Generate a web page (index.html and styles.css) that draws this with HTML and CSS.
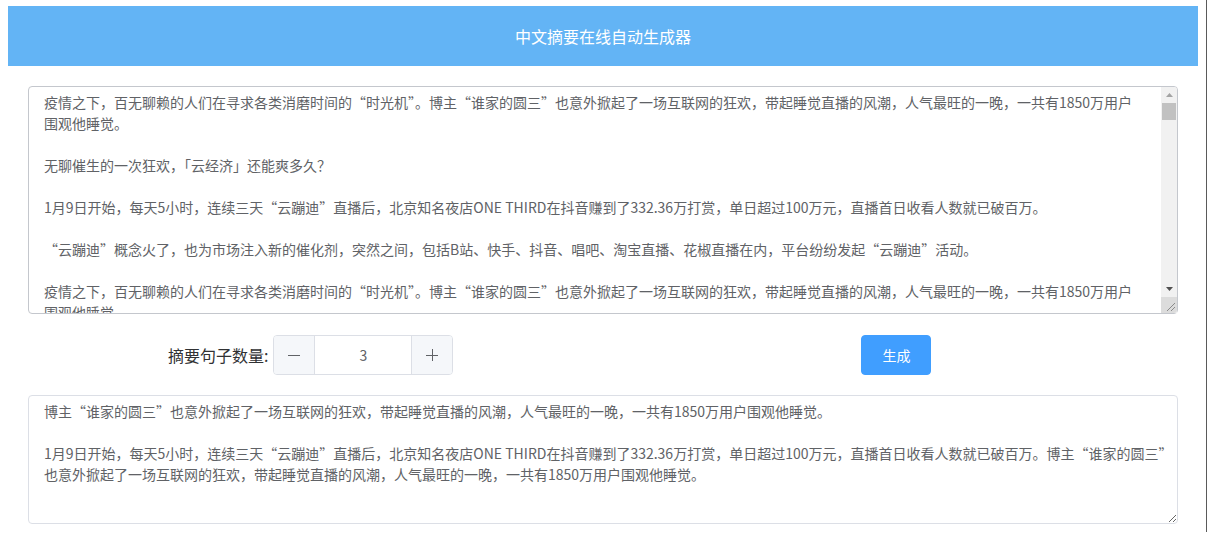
FILE: index.html
```html
<!DOCTYPE html>
<html lang="zh-CN">
<head>
  <meta charset="UTF-8">
  <title>中文摘要在线自动生成器</title>
  <link rel="stylesheet" href="styles.css">
</head>
<body>

  <div class="header">中文摘要在线自动生成器</div>

  <div class="main">
    <div class="source-wrap">
      <textarea id="source" class="box source" rows="10">疫情之下，百无聊赖的人们在寻求各类消磨时间的“时光机”。博主“谁家的圆三”也意外掀起了一场互联网的狂欢，带起睡觉直播的风潮，人气最旺的一晚，一共有1850万用户围观他睡觉。

无聊催生的一次狂欢，「云经济」还能爽多久？

1月9日开始，每天5小时，连续三天“云蹦迪”直播后，北京知名夜店ONE THIRD在抖音赚到了332.36万打赏，单日超过100万元，直播首日收看人数就已破百万。

“云蹦迪”概念火了，也为市场注入新的催化剂，突然之间，包括B站、快手、抖音、唱吧、淘宝直播、花椒直播在内，平台纷纷发起“云蹦迪”活动。

疫情之下，百无聊赖的人们在寻求各类消磨时间的“时光机”。博主“谁家的圆三”也意外掀起了一场互联网的狂欢，带起睡觉直播的风潮，人气最旺的一晚，一共有1850万用户围观他睡觉。

无聊催生的一次狂欢，「云经济」还能爽多久？

1月9日开始，每天5小时，连续三天“云蹦迪”直播后，北京知名夜店ONE THIRD在抖音赚到了332.36万打赏，单日超过100万元，直播首日收看人数就已破百万。

“云蹦迪”概念火了，也为市场注入新的催化剂，突然之间，包括B站、快手、抖音、唱吧、淘宝直播、花椒直播在内，平台纷纷发起“云蹦迪”活动。

疫情之下，百无聊赖的人们在寻求各类消磨时间的“时光机”。博主“谁家的圆三”也意外掀起了一场互联网的狂欢，带起睡觉直播的风潮，人气最旺的一晚，一共有1850万用户围观他睡觉。

无聊催生的一次狂欢，「云经济」还能爽多久？

1月9日开始，每天5小时，连续三天“云蹦迪”直播后，北京知名夜店ONE THIRD在抖音赚到了332.36万打赏，单日超过100万元，直播首日收看人数就已破百万。

“云蹦迪”概念火了，也为市场注入新的催化剂，突然之间，包括B站、快手、抖音、唱吧、淘宝直播、花椒直播在内，平台纷纷发起“云蹦迪”活动。</textarea>
      <!-- classic scrollbar (headless hides the real one) -->
      <div class="fake-bar">
        <span class="arrow">
          <svg width="7" height="4" viewBox="0 0 7 4"><polygon points="0,4 3.5,0 7,4" fill="#a3a3a3"/></svg>
        </span>
        <span class="track"><span class="thumb"></span></span>
        <span class="arrow">
          <svg width="7" height="4" viewBox="0 0 7 4"><polygon points="0,0 3.5,4 7,0" fill="#505050"/></svg>
        </span>
        <span class="corner">
          <svg width="16" height="16" viewBox="0 0 16 16"><path d="M14 6L6 14M14 10L10 14" stroke="#8a8a8a" stroke-width="1"/></svg>
        </span>
      </div>
    </div>

    <div class="controls">
      <div class="field">
        <label class="label" for="count">摘要句子数量:</label>
        <div class="num">
          <span class="num-btn minus">
            <svg width="14" height="14" viewBox="0 0 14 14"><path d="M1 7.5h12" stroke="#606266" stroke-width="1"/></svg>
          </span>
          <span class="num-val" id="count">3</span>
          <span class="num-btn plus">
            <svg width="14" height="14" viewBox="0 0 14 14"><path d="M1 7.5h12M7.5 1v12" stroke="#606266" stroke-width="1"/></svg>
          </span>
        </div>
      </div>
      <button class="primary" type="button">生成</button>
    </div>

    <textarea id="result" class="box result" rows="5">博主“谁家的圆三”也意外掀起了一场互联网的狂欢，带起睡觉直播的风潮，人气最旺的一晚，一共有1850万用户围观他睡觉。

1月9日开始，每天5小时，连续三天“云蹦迪”直播后，北京知名夜店ONE THIRD在抖音赚到了332.36万打赏，单日超过100万元，直播首日收看人数就已破百万。博主“谁家的圆三”也意外掀起了一场互联网的狂欢，带起睡觉直播的风潮，人气最旺的一晚，一共有1850万用户围观他睡觉。</textarea>
  </div>

</body>
</html>
```

FILE: styles.css
```css
html { border-right:1px solid #5a5a5a; }
body { margin:6px 8px 8px; font-family:"Noto Sans CJK SC", "Noto Sans", sans-serif; color:#303133; background:#fff; }
.header { height:60px; line-height:60px; background:#63b4f5; color:#fff; text-align:center; font-size:16px; }
.main { padding:20px 20px 0; display:flex; flex-direction:column; gap:20px; }
.box { display:block; width:100%; box-sizing:border-box; margin:0; padding:5px 15px; font-family:"Noto Sans CJK SC", sans-serif; font-size:14px; line-height:21px; color:#606266; border:1px solid #dcdfe6; border-radius:4px; outline:none; }
.source-wrap { position:relative; }
.source { height:228px; border-color:#c4c7cd; resize:none; overflow:hidden; padding-right:31px; }
.result { height:129px; padding-right:6px; }

.fake-bar { position:absolute; top:1px; right:1px; bottom:1px; width:16px; display:flex; flex-direction:column; background:#f1f1f1; border-top-right-radius:3px; }
.fake-bar .arrow { height:16px; display:flex; align-items:center; justify-content:center; }
.fake-bar .track { flex:1; display:flex; flex-direction:column; padding:0 1px; }
.fake-bar .thumb { height:17px; background:#c1c1c1; }
.fake-bar .corner { height:16px; background:#dcdcdc; display:flex; border-bottom-right-radius:3px; }

.controls { display:flex; align-items:center; height:40px; margin-top:1px; }
.field { display:flex; align-items:center; gap:5px; margin-left:140px; }
.label { font-size:16px; color:#303133; }
.num { display:flex; width:180px; height:40px; box-sizing:border-box; border:1px solid #dcdfe6; border-radius:4px; overflow:hidden; }
.num-btn { width:40px; display:flex; align-items:center; justify-content:center; background:#f5f7fa; }
.minus { border-right:1px solid #dcdfe6; }
.plus { border-left:1px solid #dcdfe6; }
.num-val { flex:1; display:flex; align-items:center; justify-content:center; font-size:14px; color:#606266; }
.primary { margin-left:408px; height:40px; padding:0 20px; border:1px solid #409eff; border-radius:4px; background:#409eff; color:#fff; font-family:inherit; font-size:14px; cursor:pointer; }
```
